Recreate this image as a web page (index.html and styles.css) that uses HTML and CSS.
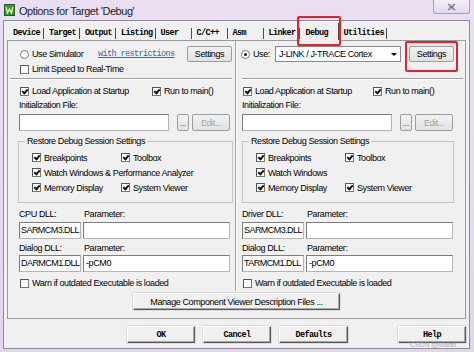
FILE: index.html
```html
<!DOCTYPE html>
<html>

<head>
    <meta charset="UTF-8">
    <link rel="stylesheet" href="styles.css">
</head>

<body>
    <div class="window">
        <div class="titlebar">
            <svg class="app-icon" width="11" height="12" viewBox="0 0 11 12">
                <rect x="0.5" y="0.5" width="10" height="11" fill="#2f9a3c" stroke="#1c5e24" />
                <polyline points="2,3 3.5,9 5.5,5 7.5,9 9,3" fill="none" stroke="#f4f0b0" stroke-width="1.3" />
            </svg>
            <span class="title">Options for Target 'Debug'</span>
            <div class="close-btn">
                <svg width="9" height="8" viewBox="0 0 9 8">
                    <path d="M1 1 L8 7 M8 1 L1 7" stroke="#7b6f86" stroke-width="1.4" fill="none" />
                    <rect x="2.5" y="2" width="4" height="4" fill="none" stroke="#a89cb3" stroke-width="0.8" />
                </svg>
            </div>
        </div>

        <div class="frame">
            <div class="tabs">
                <span class="tab">Device</span>
                <span class="tab">Target</span>
                <span class="tab">Output</span>
                <span class="tab">Listing</span>
                <span class="tab">User</span>
                <span class="tab">C/C++</span>
                <span class="tab">Asm</span>
                <span class="tab">Linker</span>
                <span class="tab selected">Debug</span>
                <span class="tab">Utilities</span>
            </div>

            <div class="panel">
                <div class="columns">
                    <!-- simulator side -->
                    <div class="col col-left">
                        <div class="row row-top">
                            <label class="check sim"><span class="radio"></span>Use Simulator</label>
                            <span class="link">with restrictions</span>
                            <button class="btn settings">Settings</button>
                        </div>
                        <div class="row">
                            <label class="check"><span class="box"></span>Limit Speed to Real-Time</label>
                        </div>
                        <div class="sep"></div>
                        <div class="row row-load">
                            <label class="check load"><span class="box on"></span>Load Application at Startup</label>
                            <label class="check"><span class="box on"></span>Run to main()</label>
                        </div>
                        <div class="row row-label">Initialization File:</div>
                        <div class="row row-file">
                            <span class="field file"></span>
                            <button class="btn dots">...</button>
                            <button class="btn edit">Edit...</button>
                        </div>
                        <div class="group">
                            <span class="group-title">Restore Debug Session Settings</span>
                            <div class="group-row">
                                <label class="check first"><span class="box on"></span>Breakpoints</label>
                                <label class="check"><span class="box on"></span>Toolbox</label>
                            </div>
                            <div class="group-row">
                                <label class="check"><span class="box on"></span>Watch Windows &amp; Performance Analyzer</label>
                            </div>
                            <div class="group-row">
                                <label class="check first"><span class="box on"></span>Memory Display</label>
                                <label class="check"><span class="box on"></span>System Viewer</label>
                            </div>
                        </div>
                        <div class="row row-dll-label">
                            <span class="dll-label">CPU DLL:</span>
                            <span>Parameter:</span>
                        </div>
                        <div class="row row-dll">
                            <span class="field dll">SARMCM3.DLL</span>
                            <span class="field param"></span>
                        </div>
                        <div class="row row-dll-label second">
                            <span class="dll-label">Dialog DLL:</span>
                            <span>Parameter:</span>
                        </div>
                        <div class="row row-dll second">
                            <span class="field dll">DARMCM1.DLL</span>
                            <span class="field param">-pCM0</span>
                        </div>
                        <div class="row row-warn">
                            <label class="check"><span class="box"></span>Warn if outdated Executable is loaded</label>
                        </div>
                    </div>

                    <div class="divider"></div>

                    <!-- target driver side -->
                    <div class="col col-right">
                        <div class="row row-top">
                            <label class="check use"><span class="radio on"></span>Use:</label>
                            <div class="select">
                                <span class="select-text">J-LINK / J-TRACE Cortex</span>
                                <span class="arrow"></span>
                            </div>
                            <button class="btn settings">Settings</button>
                        </div>
                        <div class="row"></div>
                        <div class="sep"></div>
                        <div class="row row-load">
                            <label class="check load"><span class="box on"></span>Load Application at Startup</label>
                            <label class="check"><span class="box on"></span>Run to main()</label>
                        </div>
                        <div class="row row-label">Initialization File:</div>
                        <div class="row row-file">
                            <span class="field file"></span>
                            <button class="btn dots">...</button>
                            <button class="btn edit">Edit...</button>
                        </div>
                        <div class="group">
                            <span class="group-title">Restore Debug Session Settings</span>
                            <div class="group-row">
                                <label class="check first"><span class="box on"></span>Breakpoints</label>
                                <label class="check"><span class="box on"></span>Toolbox</label>
                            </div>
                            <div class="group-row">
                                <label class="check"><span class="box on"></span>Watch Windows</label>
                            </div>
                            <div class="group-row">
                                <label class="check first"><span class="box on"></span>Memory Display</label>
                                <label class="check"><span class="box on"></span>System Viewer</label>
                            </div>
                        </div>
                        <div class="row row-dll-label">
                            <span class="dll-label">Driver DLL:</span>
                            <span>Parameter:</span>
                        </div>
                        <div class="row row-dll">
                            <span class="field dll">SARMCM3.DLL</span>
                            <span class="field param"></span>
                        </div>
                        <div class="row row-dll-label second">
                            <span class="dll-label">Dialog DLL:</span>
                            <span>Parameter:</span>
                        </div>
                        <div class="row row-dll second">
                            <span class="field dll">TARMCM1.DLL</span>
                            <span class="field param">-pCM0</span>
                        </div>
                        <div class="row row-warn">
                            <label class="check"><span class="box"></span>Warn if outdated Executable is loaded</label>
                        </div>
                    </div>
                </div>

                <div class="manage-row">
                    <button class="btn classic manage">Manage Component Viewer Description Files ...</button>
                </div>
            </div>

            <div class="dialog-buttons">
                <button class="btn classic mono">OK</button>
                <button class="btn classic mono">Cancel</button>
                <button class="btn classic mono defaults">Defaults</button>
                <button class="btn classic mono help">Help</button>
            </div>
        </div>

        <div class="mark mark-tab"></div>
        <div class="mark mark-settings"></div>
        <div class="watermark">CSDN @Malait</div>
    </div>
</body>

</html>
```

FILE: styles.css
```css
body {
    margin: 0;
    padding: 0;
    background-color: #e4d8ee;
}

.window {
    position: relative;
    width: 474px;
    height: 352px;
    display: flex;
    flex-direction: column;
    overflow: hidden;
    background: linear-gradient(#eadff2, #e2d5ec);
    font-family: "Liberation Sans", Arial, sans-serif;
    font-size: 9px;
    letter-spacing: -0.4px;
    color: #000000;
}

/* title bar */

.titlebar {
    height: 20px;
    display: flex;
    align-items: flex-start;
}

.app-icon {
    margin: 4px 0 0 4px;
}

.title {
    margin-left: 4px;
    padding-top: 1px;
    font-size: 11px;
    letter-spacing: -0.45px;
    line-height: 20px;
    color: #1c1c1c;
}

.close-btn {
    margin-left: auto;
    margin-right: 4px;
    width: 35px;
    height: 13px;
    display: flex;
    align-items: center;
    justify-content: center;
    border: 1px solid #a89db4;
    border-top: none;
    border-radius: 0 0 3px 3px;
    background: linear-gradient(#f4eff8, #e3d9eb);
}

/* dialog frame */

.frame {
    flex: 1;
    margin: 0 4px 3px 3px;
    border: 1px solid #8e8a98;
    background-color: #f0f0f0;
    display: flex;
    flex-direction: column;
}

.tabs {
    display: flex;
    align-items: flex-end;
    height: 19px;
    margin-left: 4px;
    font-family: "Liberation Mono", "Courier New", monospace;
    font-weight: bold;
    font-size: 8.5px;
    letter-spacing: -0.6px;
}

.tab {
    position: relative;
    box-sizing: border-box;
    min-width: 36px;
    height: 17px;
    padding: 4px 3px 0 5px;
    line-height: 12px;
    white-space: nowrap;
}

.tab::after {
    content: "";
    position: absolute;
    right: 0;
    top: 5px;
    bottom: 1px;
    width: 1px;
    background-color: #4a4a4a;
}

.tab.selected {
    z-index: 1;
    min-width: 39px;
    height: 20px;
    margin-bottom: -1px;
    padding-top: 5px;
    background-color: #f0f0f0;
    border-top: 1px solid #ffffff;
    border-left: 1px solid #ffffff;
}

.tab.selected::after {
    top: 1px;
    bottom: 1px;
}

.panel {
    margin: 0 3px;
    border: 1px solid #9a9a9a;
    padding-bottom: 8px;
}

.columns {
    display: flex;
}

.col {
    box-sizing: border-box;
    display: flex;
    flex-direction: column;
}

.col-left {
    width: 227px;
    padding: 4px 3px 2px 11px;
}

.col-right {
    width: 228px;
    padding: 4px 11px 2px 5px;
}

.divider {
    width: 1px;
    background-color: #a0a0a0;
    border-right: 1px solid #ffffff;
}

.row {
    display: flex;
    align-items: center;
    height: 12px;
    white-space: nowrap;
}

.row-top {
    height: 18px;
}

.sep {
    margin-top: 3px;
    height: 1px;
    background-color: #a0a0a0;
    border-bottom: 1px solid #ffffff;
}

.col-left .sep {
    margin-left: -9px;
}

.col-right .sep {
    margin-right: -9px;
}

.row-load {
    margin-top: 5px;
}

.row-label {
    margin-top: 2px;
}

.row-file {
    margin-top: 3px;
    height: 17px;
}

/* check boxes and radios */

.check {
    display: flex;
    align-items: center;
    height: 12px;
    white-space: nowrap;
}

.box {
    position: relative;
    box-sizing: border-box;
    width: 9px;
    height: 9px;
    margin: 0 3px 0 1px;
    border: 1px solid #777777;
    border-top-color: #555555;
    border-left-color: #555555;
    background-color: #ffffff;
}

.box.on::after {
    content: "";
    position: absolute;
    left: 2px;
    top: 0;
    width: 2px;
    height: 4px;
    border: solid #111111;
    border-width: 0 2px 2px 0;
    transform: rotate(40deg);
}

.radio {
    position: relative;
    box-sizing: border-box;
    width: 9px;
    height: 9px;
    margin: 0 3px 0 1px;
    border: 1px solid #7a7a7a;
    border-radius: 50%;
    background-color: #ffffff;
}

.radio.on::after {
    content: "";
    position: absolute;
    left: 2px;
    top: 2px;
    width: 3px;
    height: 3px;
    border-radius: 50%;
    background-color: #111111;
}

.check.sim {
    width: 79px;
}

.check.use {
    width: 35px;
    margin-left: -2px;
}

.check.load {
    width: 132px;
}

.col-right .check.load {
    width: 130px;
}

.link {
    font-family: "Liberation Mono", "Courier New", monospace;
    font-size: 8.5px;
    letter-spacing: -0.6px;
    color: #2f64c0;
    text-decoration: underline;
}

/* buttons and fields */

.btn {
    box-sizing: border-box;
    height: 16px;
    padding: 0;
    font-family: "Liberation Sans", Arial, sans-serif;
    font-size: 9px;
    letter-spacing: -0.4px;
    color: #000000;
    background: linear-gradient(#f2f2f2, #e2e2e2);
    border: 1px solid #9c9c9c;
    border-radius: 2px;
}

.btn.settings {
    width: 45px;
    margin-left: auto;
}

.btn.dots {
    width: 12px;
    height: 17px;
    margin-left: 8px;
    color: #6a6a6a;
}

.btn.edit {
    width: 38px;
    height: 17px;
    margin-left: 3px;
    color: #a2a2a2;
}

.btn.classic {
    height: 17px;
    border-radius: 0;
    background: #f0f0f0;
    border-color: #ffffff #5a5a5a #5a5a5a #ffffff;
    box-shadow: inset -1px -1px 0 #a8a8a8, 0 0 0 0.5px #c8c8c8;
}

.mono {
    font-family: "Liberation Mono", "Courier New", monospace;
    font-weight: bold;
    font-size: 8.5px;
    letter-spacing: -0.6px;
}

.field {
    box-sizing: border-box;
    height: 17px;
    padding-left: 2px;
    line-height: 15px;
    background-color: #ffffff;
    border: 1px solid #b4b4b4;
    border-top-color: #7c7c7c;
    border-left-color: #7c7c7c;
    overflow: hidden;
    white-space: nowrap;
}

.field.file {
    width: 150px;
}

.select {
    box-sizing: border-box;
    display: flex;
    align-items: center;
    width: 126px;
    height: 16px;
    background-color: #ffffff;
    border: 1px solid #8a8a8a;
}

.select-text {
    flex: 1;
    padding-left: 3px;
}

.arrow {
    width: 0;
    height: 0;
    margin-right: 3px;
    border-left: 3px solid transparent;
    border-right: 3px solid transparent;
    border-top: 3px solid #000000;
}

/* restore session group */

.group {
    position: relative;
    margin-top: 10px;
    height: 62px;
    box-sizing: border-box;
    padding: 8px 0 0 12px;
    border: 1px solid #c4c4c4;
}

.col-left .group {
    margin-left: -1px;
    margin-right: -1px;
}

.group-title {
    position: absolute;
    left: 6px;
    top: -6px;
    padding: 0 2px;
    line-height: 11px;
    background-color: #f0f0f0;
}

.group-row {
    display: flex;
    align-items: center;
    height: 15px;
}

.check.first {
    width: 89px;
}

/* dll rows */

.row-dll-label {
    margin-top: 5px;
}

.row-dll-label.second {
    margin-top: 3px;
}

.dll-label {
    width: 65px;
}

.row-dll {
    margin-top: 2px;
    height: 17px;
}

.row-dll.second {
    margin-top: 1px;
}

.field.dll {
    width: 62px;
    padding-left: 1px;
    letter-spacing: -0.55px;
}

.field.param {
    width: 147px;
    margin-left: 2px;
}

.row-warn {
    margin-top: 5px;
}

.manage-row {
    display: flex;
    justify-content: center;
    margin-top: 2px;
}

.btn.manage {
    width: 207px;
}

.dialog-buttons {
    display: flex;
    justify-content: flex-end;
    margin: 7px 3px 0 0;
}

.dialog-buttons .btn {
    width: 68px;
    margin-left: 8px;
}

.dialog-buttons .defaults {
    width: 69px;
}

.dialog-buttons .help {
    margin-left: 50px;
}

/* red highlight marks drawn over the screenshot */

.mark {
    position: absolute;
    border: 2px solid #e3232b;
    border-radius: 2px;
}

.mark-tab {
    left: 297px;
    top: 16px;
    width: 40px;
    height: 26px;
}

.mark-settings {
    left: 405px;
    top: 41px;
    width: 49px;
    height: 27px;
}

.watermark {
    position: absolute;
    left: 410px;
    top: 341px;
    font-size: 7px;
    line-height: 8px;
    letter-spacing: -0.1px;
    color: rgba(150, 150, 160, 0.75);
}
```
